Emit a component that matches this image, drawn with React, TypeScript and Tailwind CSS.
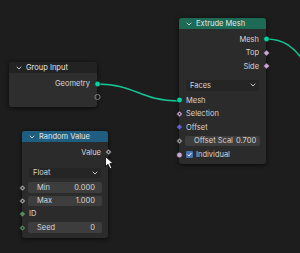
import React from "react";

type SocketKind = "circle" | "hollow" | "diamond" | "diamondDot";

function Socket({ kind, color, side }: { kind: SocketKind; color: string; side: "in" | "out" }) {
  const pos = side === "in" ? "left-[-3.5px]" : "right-[-3.5px]";
  return (
    <svg
      className={`absolute top-1/2 -translate-y-1/2 ${pos}`}
      width="7"
      height="7"
      viewBox="0 0 7 7"
    >
      {kind === "circle" && <circle cx="3.5" cy="3.5" r="2.8" fill={color} stroke="#151515" strokeWidth="0.6" />}
      {kind === "hollow" && <circle cx="3.5" cy="3.5" r="2.6" fill="none" stroke="#8a8a8a" strokeWidth="0.9" />}
      {(kind === "diamond" || kind === "diamondDot") && (
        <polygon points="3.5,0.4 6.6,3.5 3.5,6.6 0.4,3.5" fill={color} stroke="#151515" strokeWidth="0.5" />
      )}
      {kind === "diamondDot" && <circle cx="3.5" cy="3.5" r="0.9" fill="#2b2b2b" />}
    </svg>
  );
}

function Chevron({ className = "" }: { className?: string }) {
  return (
    <svg className={className} width="6" height="4" viewBox="0 0 6 4">
      <polyline points="0.7,0.7 3,3 5.3,0.7" fill="none" stroke="#d8d8d8" strokeWidth="0.9" />
    </svg>
  );
}

function Header({ title, bg }: { title: string; bg: string }) {
  return (
    <div className={`flex h-[11px] items-center gap-[4px] rounded-t-[3px] pl-[7px] text-[#e6e6e6] ${bg}`}>
      <Chevron />
      <span>{title}</span>
    </div>
  );
}

function OutRow({ label, kind, color }: { label: string; kind: SocketKind; color: string }) {
  return (
    <div className="relative flex h-[13.5px] items-center justify-end pr-[7px]">
      {label}
      <Socket kind={kind} color={color} side="out" />
    </div>
  );
}

function InRow({ label, kind, color }: { label: string; kind: SocketKind; color: string }) {
  return (
    <div className="relative flex h-[13.5px] items-center pl-[7px]">
      {label}
      <Socket kind={kind} color={color} side="in" />
    </div>
  );
}

function Dropdown({ label, className = "" }: { label: string; className?: string }) {
  return (
    <div className={`mx-[7px] flex h-[10.5px] items-center justify-between rounded-[2px] bg-[#252525] pl-[4px] pr-[3px] ${className}`}>
      <span>{label}</span>
      <Chevron />
    </div>
  );
}

function FieldRow({ label, value, kind, color, h = "h-[13.3px]" }: { label: string; value: string; kind: SocketKind; color: string; h?: string }) {
  return (
    <div className={`relative flex items-center px-[6px] ${h}`}>
      <Socket kind={kind} color={color} side="in" />
      <div className="flex h-[10.5px] w-full items-center justify-between gap-[3px] whitespace-nowrap rounded-[2px] bg-[#3d3d3d] pl-[9px] pr-[7px]">
        <span>{label}</span>
        <span>{value}</span>
      </div>
    </div>
  );
}

const GEO = "#00d6a3";
const BOOL = "#cca6d6";
const FLOAT = "#a1a1a1";
const VEC = "#6363c7";
const INT = "#598c5c";

export default function App() {
  return (
    <div className="relative h-[253px] w-[300px] overflow-hidden whitespace-nowrap bg-[#1d1d1d] font-['Inter','DejaVu_Sans',sans-serif] text-[7.5px] leading-none text-[#d6d6d6]">
      {/* links */}
      <svg className="absolute inset-0" width="300" height="253" viewBox="0 0 300 253">
        <path d="M97 84 C 136 84, 140 101, 179 101" fill="none" stroke="#13c494" strokeWidth="1.6" />
        <path d="M266 39 C 284 39, 294 47, 306 64" fill="none" stroke="#13c494" strokeWidth="1.6" />
      </svg>

      {/* Group Input */}
      <div className="absolute left-[9px] top-[62px] w-[88px] rounded-[3px] bg-[#2e2e2e] shadow-[0_1px_4px_rgba(0,0,0,0.7)]">
        <Header title="Group Input" bg="bg-[#222222]" />
        <div className="pb-[3px] pt-[4px]">
          <OutRow label="Geometry" kind="circle" color={GEO} />
          <OutRow label="" kind="hollow" color="#888" />
        </div>
      </div>

      {/* Extrude Mesh */}
      <div className="absolute left-[179px] top-[18px] w-[87px] rounded-[3px] bg-[#2b2b2b] shadow-[0_1px_4px_rgba(0,0,0,0.7)]">
        <Header title="Extrude Mesh" bg="bg-[#1d6b55]" />
        <div className="pb-[2px] pt-[3.5px]">
          <OutRow label="Mesh" kind="circle" color={GEO} />
          <OutRow label="Top" kind="diamond" color={BOOL} />
          <OutRow label="Side" kind="diamond" color={BOOL} />
          <Dropdown label="Faces" className="mt-[7px]" />
          <div className="mt-[3px]">
            <InRow label="Mesh" kind="circle" color={GEO} />
            <InRow label="Selection" kind="diamondDot" color={BOOL} />
            <InRow label="Offset" kind="diamond" color={VEC} />
          </div>
          <FieldRow label="Offset Scal" value="0.700" kind="diamondDot" color={FLOAT} h="h-[14px]" />
          <div className="relative flex h-[13.5px] items-center gap-[3px] pl-[7px]">
            <Socket kind="circle" color={BOOL} side="in" />
            <svg width="7" height="7" viewBox="0 0 7 7">
              <rect x="0" y="0" width="7" height="7" rx="1.2" fill="#4772b3" />
              <polyline points="1.5,3.6 2.9,5 5.5,1.9" fill="none" stroke="#ffffff" strokeWidth="1" />
            </svg>
            <span>Individual</span>
          </div>
        </div>
      </div>

      {/* Random Value */}
      <div className="absolute left-[22px] top-[131px] w-[86px] rounded-[3px] bg-[#2b2b2b] shadow-[0_1px_4px_rgba(0,0,0,0.7)]">
        <Header title="Random Value" bg="bg-[#1f5e80]" />
        <div className="pb-[3.5px] pt-[3.5px]">
          <OutRow label="Value" kind="diamondDot" color={FLOAT} />
          <Dropdown label="Float" className="mt-[8.5px]" />
          <div className="mt-[3px]">
            <FieldRow label="Min" value="0.000" kind="diamondDot" color={FLOAT} />
            <FieldRow label="Max" value="1.000" kind="diamondDot" color={FLOAT} />
            <div className="relative flex h-[13.3px] items-center pl-[7px]">
              ID
              <Socket kind="diamond" color={INT} side="in" />
            </div>
            <FieldRow label="Seed" value="0" kind="diamondDot" color={INT} />
          </div>
        </div>
      </div>

      {/* cursor */}
      <svg className="absolute left-[105px] top-[156px]" width="9" height="14" viewBox="0 0 9 14">
        <path d="M0.5 0.5 L0.5 10.5 L3 8.3 L5 12.8 L6.8 12 L4.9 7.6 L8.2 7.6 Z" fill="#ffffff" stroke="#000000" strokeWidth="0.8" strokeLinejoin="round" />
      </svg>
    </div>
  );
}
